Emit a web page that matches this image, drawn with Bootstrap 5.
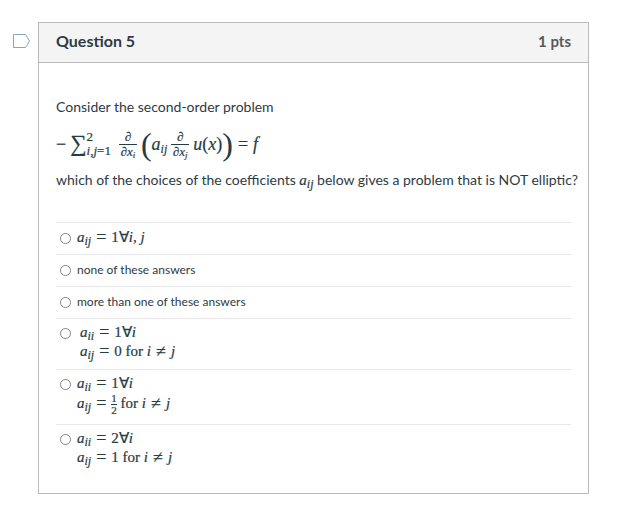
<!DOCTYPE html>
<html lang="en">
<head>
<meta charset="utf-8">
<meta name="viewport" content="width=device-width, initial-scale=1">
<title>Question 5</title>
<link href="https://cdn.jsdelivr.net/npm/bootstrap@5.3.0/dist/css/bootstrap.min.css" rel="stylesheet">
<style>
body { font-family: Lato, sans-serif; font-size: 14px; line-height: 20px; color: #2d3b45; background: #fff; }
.page { padding: 22px 34px 20px 12px; gap: 8px; }
.flag-btn { width: 18px; height: 14px; margin-top: 12px; line-height: 0; }
.question { border: 1px solid #bbb; min-width: 0; }
.question-head { background: #f4f4f4; border-bottom: 1px solid #bbb; height: 40px; padding: 0 17px 4px; }
.question-head h1 { font-size: 16px; line-height: 20px; font-weight: 700; }
.points { font-size: 15px; font-weight: 700; color: #595959; }
.question-body { padding: 34px 3px 18px 17px; }
.formula { height: 32px; margin: 11px 0 10px; }
.answers { margin: 32px 14px 0 0; }
.answer { border-top: 1px solid #e6e6e6; padding: 4px 0 8px 4px; gap: 6px; font-size: 12px; }
.answer label { line-height: 19px; }
.answer.short { padding: 5px 0 7px 4px; }
.answer input { appearance: none; width: 11px; height: 11px; border: 1px solid #858585; border-radius: 50%; margin: 5px 0 0; background: #fff; flex: none; }
.answer input:checked { background: #2d3b45; box-shadow: inset 0 0 0 2px #fff; }
.mx { font-family: "Liberation Serif", serif; font-size: 15px; white-space: nowrap; color: #243c44; -webkit-text-stroke: .2px; }
.mx .lo { font-size: 12px; line-height: 0; vertical-align: -3px; }
.answer .inset-math { padding-left: 3px; }
.rel { margin: 0 5px; font-size: 18px; line-height: 0; vertical-align: -1px; }
.formula.mx { font-size: 18px; }
.fr { display: inline-flex; flex-direction: column; align-items: center; vertical-align: middle; font-size: 11px; line-height: 11px; }
.fr > span:first-child { border-bottom: 1px solid currentColor; align-self: stretch; text-align: center; }
.fr small { font-size: 9px; line-height: 0; vertical-align: -2px; }
.fr.partial { width: 18px; font-size: 13px; line-height: 14px; }
.sigma { font-size: 23px; line-height: 32px; }
.limits { font-size: 13px; line-height: 14px; }
.fence { font-size: 32px; line-height: 26px; -webkit-text-stroke: 0; }
</style>
<script src="https://cdn.jsdelivr.net/npm/bootstrap@5.3.0/dist/js/bootstrap.bundle.min.js"></script>
</head>
<body>
<main class="page d-flex align-items-start">
  <button type="button" class="flag-btn btn p-0 border-0 flex-shrink-0" aria-label="Flag question">
    <svg width="18" height="14" viewBox="0 0 18 14" fill="none" stroke="#83a9c1"><path d="M1.5.5h12l4 6.5-4 6.5h-12z"/></svg>
  </button>
  <section class="question flex-grow-1">
    <header class="question-head d-flex align-items-center justify-content-between">
      <h1 class="m-0">Question 5</h1><span class="points">1 pts</span>
    </header>
    <div class="question-body">
      <p class="m-0">Consider the second-order problem</p>
      <div class="formula mx d-flex align-items-center">
        <span>−</span>
        <span class="sigma ms-1">∑</span>
        <span class="limits d-flex flex-column"><span>2</span><span><i>i</i>,<i>j</i>=1</span></span>
        <span class="fr partial ms-2"><span>∂</span><span>∂<i>x</i><small><i>i</i></small></span></span>
        <span class="fence ms-1">(</span>
        <span><i>a</i><i class="lo">ij</i></span>
        <span class="fr partial mx-1"><span>∂</span><span>∂<i>x</i><small><i>j</i></small></span></span>
        <span><i>u</i>(<i>x</i>)</span>
        <span class="fence">)</span>
        <span class="rel">=</span>
        <i>f</i>
      </div>
      <p class="m-0">which of the choices of the coefficients <span class="mx"><i>a</i><i class="lo">ij</i></span> below gives a problem that is NOT elliptic?</p>
      <form class="answers">
        <div class="answer short d-flex"><input type="radio" name="answer" id="a1"><label class="mx" for="a1"><i>a</i><i class="lo">ij</i><span class="rel">=</span>1∀<i>i</i>, <i>j</i></label></div>
        <div class="answer short d-flex"><input type="radio" name="answer" id="a2"><label for="a2">none of these answers</label></div>
        <div class="answer short d-flex"><input type="radio" name="answer" id="a3"><label for="a3">more than one of these answers</label></div>
        <div class="answer d-flex"><input type="radio" name="answer" id="a4"><label class="mx inset-math" for="a4"><i>a</i><i class="lo">ii</i><span class="rel">=</span>1∀<i>i</i><br><i>a</i><i class="lo">ij</i><span class="rel">=</span>0 for <i>i</i><span class="rel">≠</span><i>j</i></label></div>
        <div class="answer d-flex"><input type="radio" name="answer" id="a5"><label class="mx" for="a5"><i>a</i><i class="lo">ii</i><span class="rel">=</span>1∀<i>i</i><br><i>a</i><i class="lo">ij</i><span class="rel">=</span><span class="fr"><span>1</span><span>2</span></span> for <i>i</i><span class="rel">≠</span><i>j</i></label></div>
        <div class="answer d-flex"><input type="radio" name="answer" id="a6"><label class="mx" for="a6"><i>a</i><i class="lo">ii</i><span class="rel">=</span>2∀<i>i</i><br><i>a</i><i class="lo">ij</i><span class="rel">=</span>1 for <i>i</i><span class="rel">≠</span><i>j</i></label></div>
      </form>
    </div>
  </section>
</main>
</body>
</html>
